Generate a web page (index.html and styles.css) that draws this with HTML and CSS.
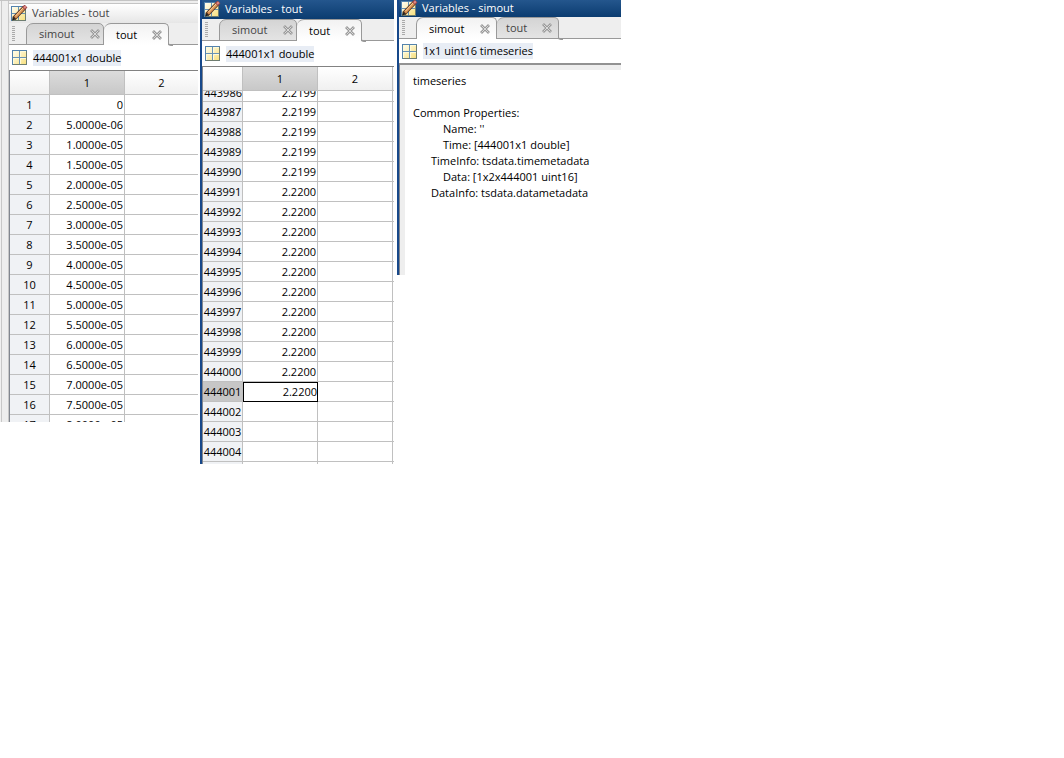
FILE: index.html
```html
<!DOCTYPE html>
<html lang="en">
<head>
  <meta charset="UTF-8">
  <meta name="viewport" content="width=device-width, initial-scale=1.0">
  <title>Variables</title>
  <link rel="stylesheet" href="styles.css">
</head>
<body>
  <!-- Shared icons -->
  <svg class="defs" width="0" height="0" aria-hidden="true">
    <defs>
      <linearGradient id="pane" x1="0" y1="0" x2="1" y2="1">
        <stop offset="0" stop-color="#fffef4"/>
        <stop offset="1" stop-color="#f8e07c"/>
      </linearGradient>
    </defs>
    <symbol id="icon-grid" viewBox="0 0 15 15">
      <rect x="0.5" y="0.5" width="14" height="14" fill="url(#pane)" stroke="#5483ad"/>
      <path d="M1.5 7V1.5H7M8.5 7V1.5H14M1.5 14V8.5H7M8.5 14V8.5H14" fill="none" stroke="#fffbd8"/>
      <path d="M7.5 1V14M1 7.5H14" stroke="#6792b5"/>
      <path d="M14.5 1V14.5H1" fill="none" stroke="#6f7d70"/>
    </symbol>
    <symbol id="icon-edit" viewBox="0 0 17 16">
      <rect x="0.5" y="1.5" width="14" height="14" fill="url(#pane)" stroke="#5483ad"/>
      <path d="M7.5 2V15M1 8.5H14" stroke="#6792b5"/>
      <path d="M14.5 2V15.5H1" fill="none" stroke="#6f7d70"/>
      <path d="M3 13.5L13.5 2.5" stroke="#56341f" stroke-width="4.4"/>
      <path d="M4 12.5L13 3" stroke="#dc9555" stroke-width="2.6"/>
      <path d="M4.5 11L12 3" stroke="#f8cf9c"/>
      <path d="M12.5 3.5L15 1" stroke="#9c4646" stroke-width="4"/>
      <path d="M13 3L14.8 1.2" stroke="#e08a86" stroke-width="2"/>
      <path d="M1 15.5L1.8 11.8L4.8 14.5Z" fill="#222"/>
    </symbol>
    <symbol id="icon-close" viewBox="0 0 10 10">
      <path d="M1 1L9 9M9 1L1 9" stroke="#9a9a9a" stroke-width="2.8"/>
      <path d="M1.5 1.5L8.5 8.5M8.5 1.5L1.5 8.5" stroke="#e0e0e0" stroke-width="0.9"/>
    </symbol>
  </svg>

  <main class="desktop">
    <section class="window window-first">
      <header class="title"><svg class="title-icon"><use href="#icon-edit"/></svg>Variables - tout</header>
      <nav class="tabs">
        <span class="grip"></span>
        <button class="tab">simout<svg class="close"><use href="#icon-close"/></svg></button>
        <button class="tab active">tout<svg class="close"><use href="#icon-close"/></svg></button>
      </nav>
      <div class="info"><svg class="info-icon"><use href="#icon-grid"/></svg><span class="size">444001x1 double</span></div>
      <div class="sheet">
        <table>
          <thead><tr><th class="num"></th><th class="col selected">1</th><th>2</th></tr></thead>
          <tbody>
            <tr><th>1</th><td>0</td><td></td></tr>
            <tr><th>2</th><td>5.0000e-06</td><td></td></tr>
            <tr><th>3</th><td>1.0000e-05</td><td></td></tr>
            <tr><th>4</th><td>1.5000e-05</td><td></td></tr>
            <tr><th>5</th><td>2.0000e-05</td><td></td></tr>
            <tr><th>6</th><td>2.5000e-05</td><td></td></tr>
            <tr><th>7</th><td>3.0000e-05</td><td></td></tr>
            <tr><th>8</th><td>3.5000e-05</td><td></td></tr>
            <tr><th>9</th><td>4.0000e-05</td><td></td></tr>
            <tr><th>10</th><td>4.5000e-05</td><td></td></tr>
            <tr><th>11</th><td>5.0000e-05</td><td></td></tr>
            <tr><th>12</th><td>5.5000e-05</td><td></td></tr>
            <tr><th>13</th><td>6.0000e-05</td><td></td></tr>
            <tr><th>14</th><td>6.5000e-05</td><td></td></tr>
            <tr><th>15</th><td>7.0000e-05</td><td></td></tr>
            <tr><th>16</th><td>7.5000e-05</td><td></td></tr>
            <tr class="cut-bottom"><th><div>17</div></th><td><div>8.0000e-05</div></td><td></td></tr>
          </tbody>
        </table>
      </div>
    </section>

    <section class="window window-second focused">
      <header class="title"><svg class="title-icon"><use href="#icon-edit"/></svg>Variables - tout</header>
      <nav class="tabs">
        <span class="grip"></span>
        <button class="tab">simout<svg class="close"><use href="#icon-close"/></svg></button>
        <button class="tab active">tout<svg class="close"><use href="#icon-close"/></svg></button>
      </nav>
      <div class="info"><svg class="info-icon"><use href="#icon-grid"/></svg><span class="size">444001x1 double</span></div>
      <div class="sheet">
        <table>
          <thead><tr><th class="num"></th><th class="col selected">1</th><th class="col">2</th><th></th></tr></thead>
          <tbody>
            <tr class="cut-top"><th><div>443986</div></th><td><div>2.2199</div></td><td></td><td></td></tr>
            <tr><th>443987</th><td>2.2199</td><td></td><td></td></tr>
            <tr><th>443988</th><td>2.2199</td><td></td><td></td></tr>
            <tr><th>443989</th><td>2.2199</td><td></td><td></td></tr>
            <tr><th>443990</th><td>2.2199</td><td></td><td></td></tr>
            <tr><th>443991</th><td>2.2200</td><td></td><td></td></tr>
            <tr><th>443992</th><td>2.2200</td><td></td><td></td></tr>
            <tr><th>443993</th><td>2.2200</td><td></td><td></td></tr>
            <tr><th>443994</th><td>2.2200</td><td></td><td></td></tr>
            <tr><th>443995</th><td>2.2200</td><td></td><td></td></tr>
            <tr><th>443996</th><td>2.2200</td><td></td><td></td></tr>
            <tr><th>443997</th><td>2.2200</td><td></td><td></td></tr>
            <tr><th>443998</th><td>2.2200</td><td></td><td></td></tr>
            <tr><th>443999</th><td>2.2200</td><td></td><td></td></tr>
            <tr><th>444000</th><td>2.2200</td><td></td><td></td></tr>
            <tr><th class="selected">444001</th><td class="cursor">2.2200</td><td></td><td></td></tr>
            <tr><th>444002</th><td></td><td></td><td></td></tr>
            <tr><th>444003</th><td></td><td></td><td></td></tr>
            <tr><th>444004</th><td></td><td></td><td></td></tr>
            <tr class="sliver"><th></th><td></td><td></td><td></td></tr>
          </tbody>
        </table>
      </div>
    </section>

    <section class="window window-third focused">
      <header class="title"><svg class="title-icon"><use href="#icon-edit"/></svg>Variables - simout</header>
      <nav class="tabs">
        <span class="grip"></span>
        <button class="tab active">simout<svg class="close"><use href="#icon-close"/></svg></button>
        <button class="tab">tout<svg class="close"><use href="#icon-close"/></svg></button>
      </nav>
      <div class="info"><svg class="info-icon"><use href="#icon-grid"/></svg><span class="size">1x1 uint16 timeseries</span></div>
      <div class="details">
        <div class="summary">
          <p>timeseries</p>
          <p class="heading">Common Properties:</p>
          <p class="short">Name: ''</p>
          <p class="short">Time: [444001x1 double]</p>
          <p class="long">TimeInfo: tsdata.timemetadata</p>
          <p class="short">Data: [1x2x444001 uint16]</p>
          <p class="long">DataInfo: tsdata.datametadata</p>
        </div>
      </div>
    </section>
  </main>
</body>
</html>
```

FILE: styles.css
```css
* {
  box-sizing: border-box;
}
body {
  margin: 0;
  background: #fff;
  color: #000;
  font-family: "Open Sans", "Noto Sans", sans-serif;
  font-size: 11px;
  line-height: 16px;
}
.defs {
  position: absolute;
}
.desktop {
  display: grid;
  grid-template-columns: 198fr 2fr 194fr 3fr 224fr 443fr;
  align-items: start;
}
.window {
  min-width: 0;
  overflow: hidden;
}
.window-first {
  grid-column: 1;
  padding-top: 2px;
  padding-left: 9px;
  background: linear-gradient(90deg, #f0f0f0 1px, #c8c8c8 1px, #c8c8c8 2px, #eee 2px, #eee 8px, #c8c8c8 8px, #c8c8c8 9px, #eee 9px);
  border-top: 1px solid #c4c4c4;
}
.window-second {
  grid-column: 3;
}
.window-third {
  grid-column: 5;
}
.focused {
  border-left: 2px solid #17488a;
}

/* Title bar */
.title {
  display: flex;
  align-items: center;
  gap: 4px;
  height: 19px;
  padding-left: 2px;
  padding-bottom: 2px;
  color: #444;
  white-space: nowrap;
  background: linear-gradient(#fff, #e6e6e6);
}
.window-first .title {
  height: 20px;
  border-top: 1px solid #c4c4c4;
}
.focused .title {
  color: #fff;
  background: linear-gradient(#24568d, #0b3c70);
}
.window-third .title {
  height: 17px;
}
.title-icon {
  width: 17px;
  height: 16px;
  flex: none;
}

/* Tabs */
.tabs {
  display: flex;
  height: 22px;
  padding-left: 3px;
  background: linear-gradient(#eee, #eee 21px, #999 21px);
}
.grip {
  width: 3px;
  height: 15px;
  margin-top: 3px;
  margin-right: 11px;
  background: repeating-linear-gradient(#aaa 0, #aaa 1px, #eee 1px, #eee 2px);
}
.tab {
  display: flex;
  align-items: center;
  justify-content: space-between;
  width: 78px;
  padding: 0 3px 0 12px;
  font: inherit;
  color: #444;
  background: linear-gradient(#d4d4d4, #e4e4e4);
  border: 1px solid #999;
  border-radius: 7px 5px 0 0;
}
.tab + .tab {
  border-left: 0;
}
.tab.active {
  color: #000;
  background: linear-gradient(#f2f2f2, #fff);
  border-bottom: 0;
}
.tab:last-child {
  width: 65px;
  padding: 0 6px 0 12px;
}
.window-third .tab {
  width: 81px;
  padding-right: 6px;
}
.window-third .tab:last-child {
  width: 62px;
  padding-left: 9px;
}
/* curve from the last tab into the strip line */
.tabs::after {
  content: "";
  width: 4px;
  height: 4px;
  margin-top: 18px;
  margin-left: -1px;
  border-left: 1px solid #999;
  border-bottom: 1px solid #999;
  border-bottom-left-radius: 3px;
}
.close {
  width: 10px;
  height: 10px;
  flex: none;
}

/* Type and size of the open variable */
.info {
  display: flex;
  align-items: center;
  gap: 6px;
  height: 25px;
  padding-left: 3px;
  background: #fff;
}
.window-third .info {
  height: 24px;
}
.info-icon {
  width: 15px;
  height: 15px;
  flex: none;
}
.size {
  background: #e8edf5;
  white-space: nowrap;
}

/* Spreadsheet */
.sheet {
  background: #fff;
  border-top: 1px solid #828282;
  border-left: 1px solid #828790;
}
table {
  width: 100%;
  table-layout: fixed;
  border-spacing: 0;
}
th, td {
  height: 20px;
  padding: 0;
  font-weight: normal;
  text-align: right;
  border-right: 1px solid #c0c0c0;
  border-bottom: 1px solid #c0c0c0;
}
td {
  padding-right: 1px;
}
th {
  text-align: center;
  background: #f0f2f5;
}
tr > :last-child {
  border-right: 0;
}
thead th {
  height: 24px;
  background: linear-gradient(#fff, #f0f0f0);
}
.num {
  width: 40px;
}
.col {
  width: 75px;
}
th.selected {
  background: #c6c6c6;
}
thead th.selected {
  background: linear-gradient(#dcdcdc, #c8c8c8);
}
.cursor {
  padding-right: 0;
  border: 1px solid #000;
}
.cut-top > * {
  height: 11px;
}
.cut-top div {
  display: flex;
  align-items: flex-end;
  justify-content: flex-end;
  height: 10px;
  overflow: hidden;
}
.cut-bottom > * {
  height: 7px;
  border-bottom: 0;
}
.cut-bottom div {
  height: 7px;
  padding-top: 2px;
  overflow: hidden;
}
.sliver > * {
  height: 2px;
  border-bottom: 0;
}

/* Object summary */
.details {
  padding: 5px 0 0 5px;
  background: #eee;
  border-top: 2px solid #929292;
  border-left: 1px solid #828790;
}
.summary {
  padding: 3px 8px 74px;
  white-space: nowrap;
  background: #fff;
}
.summary p {
  margin: 0;
}
.summary .heading {
  margin-top: 16px;
}
.summary .short {
  padding-left: 30px;
}
.summary .long {
  padding-left: 18px;
}
```
